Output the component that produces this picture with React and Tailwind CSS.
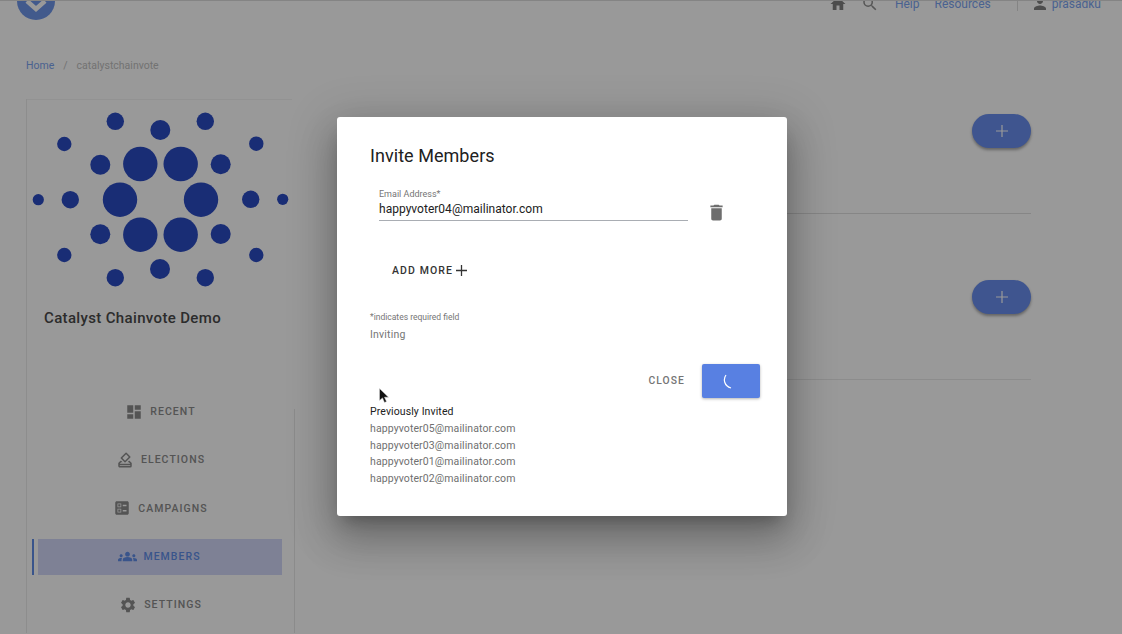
import React from "react";
import {
  MdBallot,
  MdDashboard,
  MdDelete,
  MdGroups,
  MdHome,
  MdOutlineHowToVote,
  MdPerson,
  MdSearch,
  MdSettings,
} from "react-icons/md";

const dots = [
  [115.3, 121.3, 8.7], [160.3, 130, 10], [205.3, 121.3, 8.7],
  [64.3, 144, 7.2], [256.3, 143.7, 7.2],
  [100.3, 164.7, 10], [140.3, 164, 17.2], [180.7, 164, 17.2], [220.7, 164.3, 10],
  [38.3, 199.7, 5.6], [70.3, 199.7, 8.7], [120, 199.7, 17.2], [201, 199.7, 17.2], [250.7, 199.3, 8.7], [282.7, 199.3, 5.6],
  [100.3, 234.3, 10], [140.3, 234.7, 17.2], [180.7, 234.7, 17.2], [220.7, 234, 10],
  [64.3, 255, 7.2], [256.3, 255, 7.2],
  [115.3, 277.7, 8.7], [160, 269, 10], [205.3, 277.7, 8.7],
];

const navItems = [
  { label: "RECENT", icon: MdDashboard },
  { label: "ELECTIONS", icon: MdOutlineHowToVote },
  { label: "CAMPAIGNS", icon: MdBallot },
  { label: "MEMBERS", icon: MdGroups, active: true },
  { label: "SETTINGS", icon: MdSettings },
];

const invited = ["happyvoter05", "happyvoter03", "happyvoter01", "happyvoter02"];

const PlusButton = () => (
  <button className="w-[59px] h-[34px] rounded-full bg-[#698eee] text-white flex items-center justify-center shadow-[0_2px_3px_rgba(0,0,0,0.35)]">
    <svg width="12" height="12" viewBox="0 0 12 12" stroke="currentColor" strokeWidth="1.2">
      <path d="M6 0v12M0 6h12" />
    </svg>
  </button>
);

const Sidebar = () => (
  <div className="w-[269px] shrink-0 border-l border-[#ececec]">
    <div className="h-[284px] mr-[3px] border-t border-[#f4f4f4] relative">
      <svg className="absolute left-[-27px] top-[-100px]" width="320" height="300" viewBox="0 0 320 300">
        {dots.map(([cx, cy, r], i) => (
          <circle key={i} cx={cx} cy={cy} r={r} fill="#2b4bc3" />
        ))}
      </svg>
      <div className="absolute left-[17px] top-[208px] text-[15px] leading-5 font-medium tracking-[0.35px] text-[#4a4a4a]">
        Catalyst Chainvote Demo
      </div>
    </div>
    <div className="relative h-[250px] pt-[11px] pl-[5px] pr-[13px]">
      <div className="absolute right-0 top-[26px] bottom-0 w-px bg-[#e8e8e8]" />
      {navItems.map(({ label, icon: Icon, active }) => (
        <div
          key={label}
          className={`h-[36px] mb-[12.2px] flex items-center justify-center text-[10.5px] font-medium tracking-[1.05px] ${
            active
              ? "pl-[3px] gap-[6px] bg-[#d3d8f8] text-[#5f8de8] border-l-[2px] border-[#5f8de8] shadow-[inset_4px_0_0_#ffffff]"
              : "pl-[7px] gap-[7px] text-[#8c8c8c]"
          }`}
        >
          <Icon className={active ? "text-[19px]" : "text-[18px]"} />
          <span>{label}</span>
        </div>
      ))}
    </div>
  </div>
);

const InviteDialog = () => (
  <div className="absolute inset-0 bg-black/40 flex items-start justify-center pt-[117px] pl-[2px] text-[#212121]">
    <div className="w-[450px] h-[399px] bg-white rounded-[3px] pl-[33px] pr-[27px] pt-[27px] shadow-[0_11px_15px_-7px_rgba(0,0,0,0.25),0_24px_38px_3px_rgba(0,0,0,0.18),0_9px_46px_8px_rgba(0,0,0,0.16)] relative">
      <h2 className="text-[18px] leading-6 font-normal tracking-[0.05px]">Invite Members</h2>

      <div className="flex items-center mt-[19px] ml-[9px]">
        <div className="w-[309px] border-b border-[#a9adb3] pb-[3px]">
          <div className="text-[9px] leading-[11px] text-[#757575]">Email Address*</div>
          <div className="text-[12px] leading-[16px] mt-[1px] tracking-[0.02px]">happyvoter04@mailinator.com</div>
        </div>
        <MdDelete className="ml-[18px] mt-[15px] text-[21px] text-[#6e6e6e]" />
      </div>

      <div className="flex items-center mt-[40px] ml-[22px] text-[10.5px] font-medium tracking-[1.1px] text-[#333333]">
        ADD MORE
        <svg className="ml-[3px]" width="11" height="11" viewBox="0 0 12 12" stroke="#333333" strokeWidth="1.4">
          <path d="M6 0v12M0 6h12" />
        </svg>
      </div>

      <div className="mt-[33px] text-[8.5px] leading-[11px] text-[#757575]">*indicates required field</div>
      <div className="mt-[5px] text-[10.5px] leading-[14px] text-[#757575] tracking-[0.2px]">Inviting</div>

      <div className="flex items-center justify-end mt-[22px]">
        <span className="text-[10.3px] font-medium tracking-[1.1px] text-[#757575] mr-[17px]">CLOSE</span>
        <div className="w-[58px] h-[34px] rounded-[2px] bg-[#5880e2] flex items-center justify-center shadow-[0_1px_3px_rgba(0,0,0,0.3)]">
          <svg width="16" height="16" viewBox="0 0 16 16" fill="none" stroke="white" strokeWidth="1.2">
            <path d="M3 2C0 6 1 13 8 15" />
          </svg>
        </div>
      </div>

      <div className="mt-[6px] text-[10.5px] leading-[16.6px] tracking-[0.1px]">
        <div className="text-[#212121] mb-[0.6px]">Previously Invited</div>
        {invited.map((name) => (
          <div key={name} className="text-[#6f6f6f]">
            {name}@mailinator.com
          </div>
        ))}
      </div>

      <svg className="absolute left-[42px] top-[271px]" width="11" height="16" viewBox="0 0 11 16">
        <path d="M0.5 0.5v12l3-2.6 2 4.6 2-0.9-2-4.4h4z" fill="#111111" stroke="#dddddd" strokeWidth="0.5" />
      </svg>
    </div>
  </div>
);

export default function App() {
  return (
    <div className="relative w-[1122px] h-[634px] overflow-hidden bg-white font-['Roboto',sans-serif]">
      <header className="h-[20px] flex items-start justify-between pl-[17px] pr-[21px] overflow-hidden border-t border-[#dddddd]">
        <div className="w-[38px] h-[38px] -mt-[19px] rounded-full bg-[#6f96ea] flex items-center justify-center">
          <svg width="24" height="24" viewBox="0 0 24 24" fill="none" stroke="white" strokeWidth="4.5">
            <path d="M3 12l9 8 9-8" />
          </svg>
        </div>
        <div className="flex items-center h-[10px] -mt-[2px] text-[12px] text-[#7ba3f0]">
          <MdHome className="text-[18px] text-[#808080]" />
          <MdSearch className="text-[18px] text-[#909090] ml-[14px]" />
          <span className="ml-[16px]">Help</span>
          <span className="ml-[15px]">Resources</span>
          <span className="ml-[26px] w-px h-[14px] bg-[#dddddd]" />
          <MdPerson className="text-[18px] text-[#808080] ml-[13px]" />
          <span className="ml-[3px]">prasadku</span>
        </div>
      </header>

      <nav className="pl-[26px] pt-[38px] h-[79px] text-[10.5px] leading-4 text-[#c0c0c0]">
        <span className="text-[#7ba3f0]">Home</span>
        <span className="mx-[9px]">/</span>
        <span>catalystchainvote</span>
      </nav>

      <div className="flex pl-[26px] pr-[91px]">
        <Sidebar />
        <main className="flex-1 ml-[42px]">
          <section className="h-[115px] flex flex-col items-end border-b border-[#e0e0e0] pt-[15px]">
            <PlusButton />
          </section>
          <section className="h-[166px] flex flex-col items-end border-b border-[#eaeaea] pt-[66px]">
            <PlusButton />
          </section>
        </main>
      </div>

      <InviteDialog />
    </div>
  );
}
